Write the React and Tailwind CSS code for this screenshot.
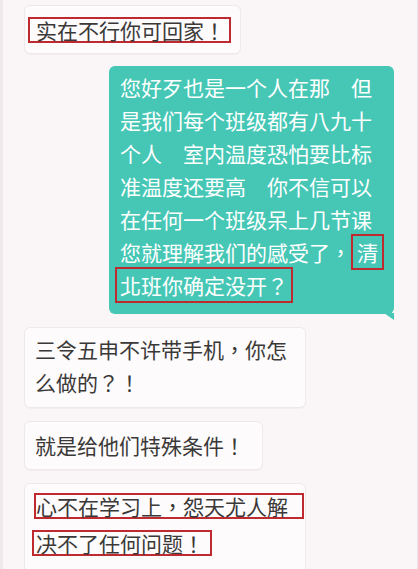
import React from "react"

const font = { fontFamily: '"Noto Sans CJK TC", "Noto Sans CJK SC", "Noto Sans", sans-serif' }

function Bubble({ className = "", children }) {
  return (
    <div
      className={`rounded-md border border-[#efe8ec] bg-[#fdfbfc] text-[#3b3838] shadow-[0_1px_1px_rgba(0,0,0,0.03)] ${className}`}
    >
      {children}
    </div>
  )
}

function Boxed({ className = "", children }) {
  return <span className={`border-2 border-[#bf2a31] ${className}`}>{children}</span>
}

export default function App() {
  return (
    <div
      className="h-[569px] w-[418px] overflow-hidden bg-[#faf5f7] border-l-[3px] border-r border-l-[#efe9ec] border-r-[#ebe5e8] text-[21px]"
      style={font}
    >
      <div className="flex flex-col pl-[21px] pt-[5px]">
        <Bubble className="w-[217px] pl-[3px] pt-[11px] pb-[10px] leading-[24px]">
          <Boxed className="inline-block pl-[6px] pr-[4px] h-[26px] leading-[22px]">实在不行你可回家！</Boxed>
        </Bubble>

        <div className="relative ml-[85px] mt-[12px] w-[285px] rounded-md bg-[#46c7b6] pl-[11px] pr-[8px] pt-[5px] pb-[12px] leading-[33px] text-white">
          <div>您好歹也是一个人在那　但</div>
          <div>是我们每个班级都有八九十</div>
          <div>个人　室内温度恐怕要比标</div>
          <div>准温度还要高　你不信可以</div>
          <div>在任何一个班级呆上几节课</div>
          <div>
            您就理解我们的感受了，<Boxed className="px-[4px] py-[1px]">清</Boxed>
          </div>
          <div className="-ml-[5px]">
            <Boxed className="px-[3px] py-[1px]">北班你确定没开？</Boxed>
          </div>
          <svg className="absolute -bottom-[6px] right-0" width="10" height="7" viewBox="0 0 10 7">
            <path d="M0 0 L10 0 L10 7 Z" fill="#46c7b6" />
          </svg>
        </div>

        <Bubble className="mt-[13px] w-[282px] pl-[10px] pt-[5px] pb-[8px] leading-[33px]">
          <div>三令五申不许带手机，你怎</div>
          <div>么做的？！</div>
        </Bubble>

        <Bubble className="mt-[13px] w-[239px] pl-[10px] py-[7px] leading-[33px]">
          就是给他们特殊条件！
        </Bubble>

        <Bubble className="mt-[13px] w-[282px] pl-[9px] pt-[9px] pb-[20px] leading-[22px]">
          <div>
            <Boxed className="inline-block w-[270px] pl-[0px]">心不在学习上，怨天尤人解</Boxed>
          </div>
          <div className="mt-[11px] -ml-[2px]">
            <Boxed className="inline-block pl-[2px] pr-[6px]">决不了任何问题！</Boxed>
          </div>
        </Bubble>
      </div>
    </div>
  )
}
